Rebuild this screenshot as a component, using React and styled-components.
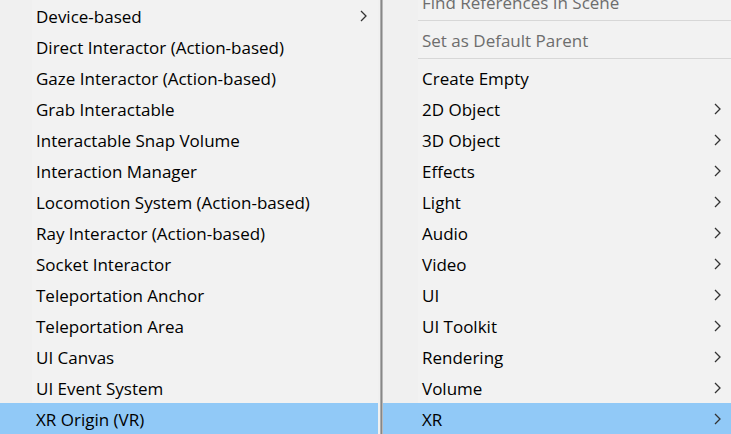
import React from "react";
import styled, { createGlobalStyle } from "styled-components";

const GlobalStyle = createGlobalStyle`
  html, body {
    margin: 0;
    padding: 0;
    background: #f2f2f2;
    overflow: hidden;
  }
  body {
    font-family: "Open Sans", "Noto Sans", sans-serif;
  }
`;

const Page = styled.div`
  display: flex;
  width: 731px;
  height: 434px;
  overflow: hidden;
  background: #f2f2f2;
`;

const LeftMenu = styled.div`
  position: relative;
  z-index: 1;
  flex: 0 0 378px;
  display: flex;
  flex-direction: column;
  border-right: 2px solid #f0f0f0;
  background: linear-gradient(to right, #f0f0f0 32px, #f2f2f2 32px);
  box-shadow: 1px 0 0 #adadad, 2px 0 0 #878787, 3px 0 0 #b9b9b9;
`;

const RightMenu = styled.div`
  flex: 1;
  overflow: hidden;
  background: linear-gradient(to right, #f0f0f0 38px, #f2f2f2 38px);
`;

const RightList = styled.div`
  display: flex;
  flex-direction: column;
  margin-top: -14px;
`;

const Item = styled.div`
  display: flex;
  align-items: center;
  height: 31px;
  flex: 0 0 31px;
  box-sizing: border-box;
  padding-left: ${(p) => p.$indent}px;
  padding-right: ${(p) => p.$arrowPad}px;
  padding-top: 1px;
  font-size: 17px;
  white-space: nowrap;
  color: ${(p) => (p.$disabled ? "#6d6d6d" : "#000")};
  background: ${(p) => (p.$active ? "#91c9f7" : "transparent")};
`;

const Label = styled.span`
  flex: 1;
`;

const Separator = styled.div`
  flex: 0 0 7px;
  display: flex;
  align-items: center;
  padding-left: 38px;

  &::after {
    content: "";
    flex: 1;
    height: 1px;
    background: #d7d7d7;
  }
`;

const Chevron = () => (
  <svg width="7" height="12" viewBox="0 0 7 12" style={{ marginTop: -1 }}>
    <polyline
      points="1,1 6,6 1,11"
      fill="none"
      stroke="#333"
      strokeWidth="1.3"
    />
  </svg>
);

const leftItems = [
  { label: "Device-based", sub: true },
  { label: "Direct Interactor (Action-based)" },
  { label: "Gaze Interactor (Action-based)" },
  { label: "Grab Interactable" },
  { label: "Interactable Snap Volume" },
  { label: "Interaction Manager" },
  { label: "Locomotion System (Action-based)" },
  { label: "Ray Interactor (Action-based)" },
  { label: "Socket Interactor" },
  { label: "Teleportation Anchor" },
  { label: "Teleportation Area" },
  { label: "UI Canvas" },
  { label: "UI Event System" },
  { label: "XR Origin (VR)", active: true },
];

const rightItems = [
  { label: "Find References In Scene", disabled: true },
  { sep: true },
  { label: "Set as Default Parent", disabled: true },
  { sep: true },
  { label: "Create Empty" },
  { label: "2D Object", sub: true },
  { label: "3D Object", sub: true },
  { label: "Effects", sub: true },
  { label: "Light", sub: true },
  { label: "Audio", sub: true },
  { label: "Video", sub: true },
  { label: "UI", sub: true },
  { label: "UI Toolkit", sub: true },
  { label: "Rendering", sub: true },
  { label: "Volume", sub: true },
  { label: "XR", sub: true, active: true },
];

export default function App() {
  return (
    <>
      <GlobalStyle />
      <Page>
        <LeftMenu>
          {leftItems.map((item) => (
            <Item
              key={item.label}
              $indent={36}
              $arrowPad={11}
              $active={item.active}
            >
              <Label>{item.label}</Label>
              {item.sub && <Chevron />}
            </Item>
          ))}
        </LeftMenu>
        <RightMenu>
          <RightList>
            {rightItems.map((item, i) =>
              item.sep ? (
                <Separator key={"sep" + i} />
              ) : (
                <Item
                  key={item.label}
                  $indent={42}
                  $arrowPad={10}
                  $active={item.active}
                  $disabled={item.disabled}
                >
                  <Label>{item.label}</Label>
                  {item.sub && <Chevron />}
                </Item>
              )
            )}
          </RightList>
        </RightMenu>
      </Page>
    </>
  );
}
